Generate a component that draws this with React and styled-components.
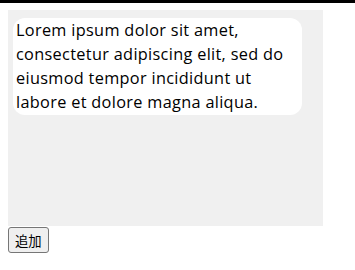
import React from "react";
import styled, { createGlobalStyle } from "styled-components";

const Global = createGlobalStyle`
  html, body { margin: 0; padding: 0; background: #fff; }
  body { font-family: "Open Sans", "Noto Sans CJK JP", sans-serif; }
`;

const TopBar = styled.div`
  height: 3px;
  background: #000;
`;

const Page = styled.div`
  padding: 7px 8px 0;
`;

const Board = styled.div`
  width: 315px;
  height: 216px;
  background: #f0f0f0;
  box-sizing: border-box;
  padding: 8px 21px 0 5px;
`;

const Card = styled.div`
  background: #fff;
  border-radius: 12px;
  padding: 0 4px 1px 3px;
  font-family: "Open Sans", "Noto Sans CJK JP", sans-serif;
  font-size: 16.3px;
  letter-spacing: 0.32px;
  line-height: 24px;
  color: #000;
`;

const AddButton = styled.button`
  display: block;
  margin-top: 1px;
  font-family: "Noto Sans CJK JP", sans-serif;
  font-size: 13.33px;
  padding: 1px 6px;
  color: #000;
  background: #efefef;
  border: 1px solid #767676;
  border-radius: 3px;
  height: 26px;
`;

export default function App() {
  return (
    <>
      <Global />
      <TopBar />
      <Page>
        <Board>
          <Card>
            Lorem ipsum dolor sit amet, consectetur adipiscing elit, sed do eiusmod tempor incididunt ut labore et dolore magna aliqua.
          </Card>
        </Board>
        <AddButton>追加</AddButton>
      </Page>
    </>
  );
}
